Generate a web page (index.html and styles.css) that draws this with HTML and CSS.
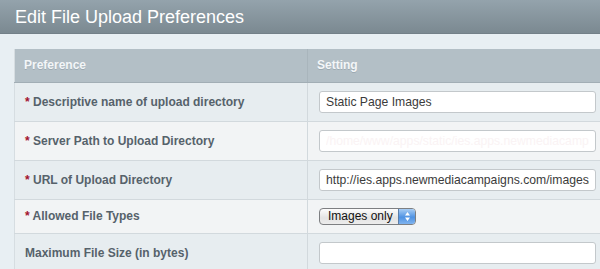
FILE: index.html
```html
<!DOCTYPE html>
<html lang="en">
<head>
    <meta charset="UTF-8">
    <meta name="viewport" content="width=device-width, initial-scale=1.0">
    <title>Edit File Upload Preferences</title>
    <link rel="stylesheet" href="styles.css">
</head>
<body>
    <div class="page-heading">
        <h1>Edit File Upload Preferences</h1>
    </div>
    <div class="content">
        <table class="prefs-table">
            <thead>
                <tr>
                    <th class="col-pref">Preference</th>
                    <th class="col-setting">Setting</th>
                </tr>
            </thead>
            <tbody>
                <tr class="odd">
                    <td class="label"><span class="required">*</span> Descriptive name of upload directory</td>
                    <td class="field"><input type="text" class="text-input" value="Static Page Images"></td>
                </tr>
                <tr class="even">
                    <td class="label"><span class="required">*</span> Server Path to Upload Directory</td>
                    <td class="field"><input type="text" class="text-input faded" value="/home/www/apps/static/ies.apps.newmediacampaigns.com/images/"></td>
                </tr>
                <tr class="odd">
                    <td class="label"><span class="required">*</span> URL of Upload Directory</td>
                    <td class="field"><input type="text" class="text-input" value="http://ies.apps.newmediacampaigns.com/images/"></td>
                </tr>
                <tr class="even">
                    <td class="label"><span class="required">*</span> Allowed File Types</td>
                    <td class="field">
                        <div class="select-box">
                            <span class="select-text">Images only</span>
                            <span class="select-arrows">
                                <svg width="7" height="11" viewBox="0 0 7 11"><path d="M3.5 1 L6 4.5 H1 Z M3.5 10 L6 6.5 H1 Z" fill="#fff"/></svg>
                            </span>
                        </div>
                    </td>
                </tr>
                <tr class="odd">
                    <td class="label">Maximum File Size (in bytes)</td>
                    <td class="field"><input type="text" class="text-input" value=""></td>
                </tr>
            </tbody>
        </table>
    </div>
</body>
</html>
```

FILE: styles.css
```css
:root {
    --page-bg: #e8eff3; --row-blue: #e7edf0; --row-light: #f2f4f5;
    --line: #d2d9dd; --label-color: #56626b; --required: #a3122e;
}
* { box-sizing: border-box; }
body { margin: 0; background-color: var(--page-bg); font-family: 'Liberation Sans', Arial, sans-serif; overflow: hidden; }
.page-heading {
    height: 34px; padding: 0 15px;
    background: linear-gradient(#94a3ac, #7b8991);
    border-bottom: 1px solid #738088;
}
.page-heading h1 { margin: 0; font-size: 18px; font-weight: normal; line-height: 34px; color: #fff; }
.content { padding: 15px 0 0 14px; }
.prefs-table { border-collapse: collapse; width: 640px; border-left: 1px solid #d6dde1; }
.prefs-table th {
    height: 33px; padding: 0 9px; text-align: left;
    font-size: 12px; font-weight: bold; color: #f3f6f8;
    background-color: #b3bfc6; border-bottom: 1px solid #a2aeb5;
    text-shadow: 0 1px 0 rgba(120, 135, 145, 0.4);
}
.col-pref { width: 293px; border-right: 1px solid #a9b5bc; }
.prefs-table td { padding: 8px 0 8px 11px; border-bottom: 1px solid var(--line); }
.prefs-table tr.odd td { background-color: var(--row-blue); }
.prefs-table tr.even td { background-color: var(--row-light); }
.prefs-table td.label {
    padding-left: 10px; border-right: 1px solid var(--line);
    font-size: 12px; font-weight: bold; color: var(--label-color);
}
.required { color: var(--required); }
.text-input {
    display: block; width: 277px; height: 22px; padding: 0 6px;
    border: 1px solid #c3c8cb; border-radius: 3px; background: #fff;
    font-family: 'Liberation Sans', Arial, sans-serif; font-size: 12.2px; color: #3b3b3b;
}
.text-input.faded { color: #faf3f4; }
.select-box {
    display: flex; width: 97px; height: 17px; overflow: hidden;
    border: 1px solid #7d7f82; border-radius: 4px;
    background: linear-gradient(#fdfdfd, #e3e3e3 60%, #ececec);
}
.select-text { flex: 1; padding-left: 8px; font-size: 12px; line-height: 15px; color: #111; }
.select-arrows {
    width: 17px; display: flex; align-items: center; justify-content: center;
    background: linear-gradient(#a8cdf4, #4f92e3 55%, #7fb3ee); border-left: 1px solid #5d7ea8;
}
```
